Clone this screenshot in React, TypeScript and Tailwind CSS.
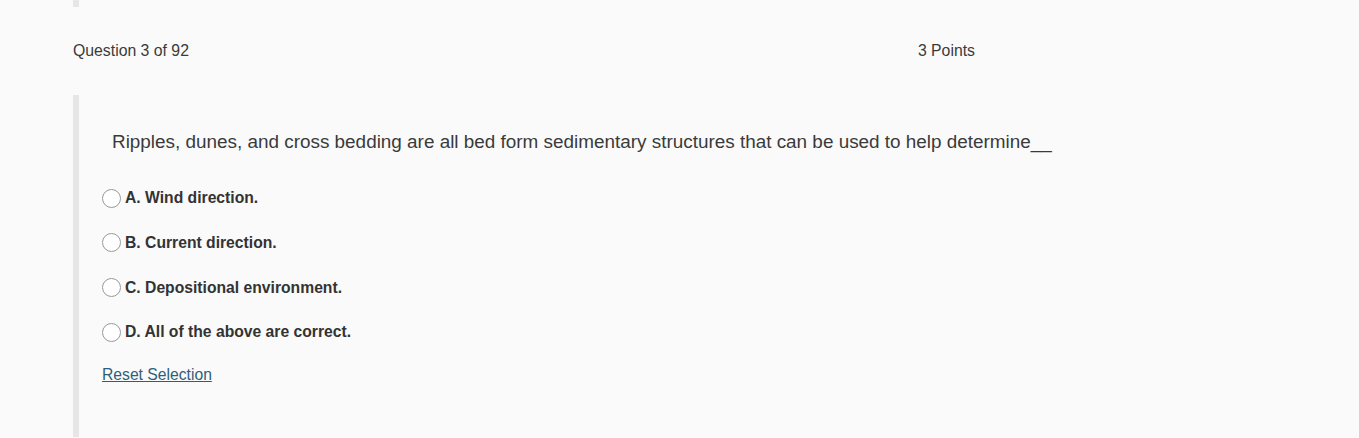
import React from "react";

const options = [
  "A. Wind direction.",
  "B. Current direction.",
  "C. Depositional environment.",
  "D. All of the above are correct.",
];

export default function App() {
  return (
    <div className="w-[1359px] h-[438px] bg-[#fafafa] overflow-hidden text-[#3a3a3a]" style={{ fontFamily: '"Liberation Sans", Arial, sans-serif' }}>
      <div className="ml-[73px] w-[6px] h-[7px] bg-[#e6e6e6]" />
      <div className="ml-[73px] mt-[35px] flex w-[902px] justify-between text-[15.8px] leading-[18px]">
        <span>Question 3 of 92</span>
        <span>3 Points</span>
      </div>
      <div className="ml-[73px] mt-[35px] h-[342px] border-l-[6px] border-[#e6e6e6] pl-[23px] pt-[34px]">
        <p className="ml-[10px] text-[18.9px] leading-[26px] text-[#3a3a3a]">
          Ripples, dunes, and cross bedding are all bed form sedimentary structures that can be used to help determine__
        </p>
        <div className="mt-[33px] flex flex-col gap-[24.7px]">
          {options.map((o) => (
            <label key={o} className="flex items-center h-[20px]">
              <span className="w-[19px] h-[19px] rounded-full border border-[#999999] bg-white" />
              <span className="ml-[4px] text-[15.7px] font-bold text-[#333333]">{o}</span>
            </label>
          ))}
        </div>
        <a className="mt-[21px] inline-block text-[15.7px] underline text-[#2f5f78]">Reset Selection</a>
      </div>
    </div>
  );
}
